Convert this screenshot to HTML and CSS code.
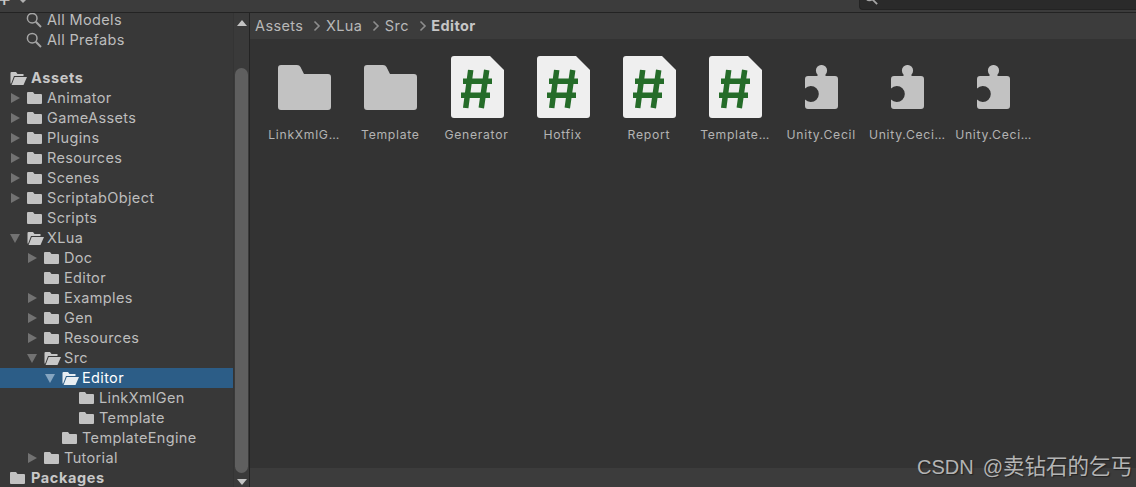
FILE: index.html
```html
<!DOCTYPE html>
<html lang="en">
<head>
<meta charset="utf-8">
<title>Project</title>
<link rel="stylesheet" href="styles.css">
</head>
<body>
<svg class="defs" width="0" height="0" aria-hidden="true">
  <symbol id="f" viewBox="0 0 15 12"><path d="M1 0H6L7.5 2H14a1 1 0 0 1 1 1V11a1 1 0 0 1-1 1H1a1 1 0 0 1-1-1V1a1 1 0 0 1 1-1Z"/></symbol>
  <symbol id="o" viewBox="0 0 17 13"><path d="M1.500 0H6L7.500 2H13.500V4H4L1.200 11.500H.5V1a1 1 0 0 1 1-1Z"/><path d="M4.700 5H17L13.500 13H1.600Z"/></symbol>
  <symbol id="s" viewBox="0 0 16 16"><circle cx="6.200" cy="6.200" r="4.800" fill="none" stroke="#a5a5a5" stroke-width="1.500"/><path d="M9.800 9.800 15 15" stroke="#a5a5a5" stroke-width="2"/></symbol>
  <symbol id="big" viewBox="0 0 53 45"><path d="M3 0H19Q21.500 0 22.500 2L26 9H50a3 3 0 0 1 3 3V42a3 3 0 0 1-3 3H3a3 3 0 0 1-3-3V3a3 3 0 0 1 3-3Z"/></symbol>
  <symbol id="doc" viewBox="0 0 53 62"><path d="M3 0H39L53 14V59a3 3 0 0 1-3 3H3a3 3 0 0 1-3-3V3a3 3 0 0 1 3-3Z" fill="#efefef"/><path d="M19.700 14 14.700 52M35.700 14 30.300 52M12 25.300H41M10 39.300H39" fill="none" stroke="#256c29" stroke-width="5.500"/></symbol>
  <symbol id="pz" viewBox="0 0 33 44"><path d="M3 11H12.500V9.500A5.600 5.600 0 1 1 20.500 9.500V11H30a3 3 0 0 1 3 3V41a3 3 0 0 1-3 3H3a3 3 0 0 1-3-3V34.500A8 8 0 1 0 0 23.500V14a3 3 0 0 1 3-3Z"/></symbol>
</svg>
<header class="topbar">
  <span class="plus">+</span><span class="caret"></span>
  <div class="search"><svg class="search-icon"><use href="#s"/></svg></div>
</header>
<main class="panels">
  <aside class="side">
    <nav class="tree">
      <div class="row d1 first"><span class="arrow"></span><svg class="ico mag"><use href="#s"/></svg><span>All Models</span></div>
      <div class="row d1 gapafter"><span class="arrow"></span><svg class="ico mag"><use href="#s"/></svg><span>All Prefabs</span></div>
      <div class="row d0 bold"><span class="arrow"></span><svg class="ico open"><use href="#o"/></svg><span>Assets</span></div>
      <div class="row d1"><span class="arrow right"></span><svg class="ico"><use href="#f"/></svg><span>Animator</span></div>
      <div class="row d1"><span class="arrow right"></span><svg class="ico"><use href="#f"/></svg><span>GameAssets</span></div>
      <div class="row d1"><span class="arrow right"></span><svg class="ico"><use href="#f"/></svg><span>Plugins</span></div>
      <div class="row d1"><span class="arrow right"></span><svg class="ico"><use href="#f"/></svg><span>Resources</span></div>
      <div class="row d1"><span class="arrow right"></span><svg class="ico"><use href="#f"/></svg><span>Scenes</span></div>
      <div class="row d1"><span class="arrow right"></span><svg class="ico"><use href="#f"/></svg><span>ScriptabObject</span></div>
      <div class="row d1"><span class="arrow"></span><svg class="ico"><use href="#f"/></svg><span>Scripts</span></div>
      <div class="row d1"><span class="arrow down"></span><svg class="ico open"><use href="#o"/></svg><span>XLua</span></div>
      <div class="row d2"><span class="arrow right"></span><svg class="ico"><use href="#f"/></svg><span>Doc</span></div>
      <div class="row d2"><span class="arrow"></span><svg class="ico"><use href="#f"/></svg><span>Editor</span></div>
      <div class="row d2"><span class="arrow right"></span><svg class="ico"><use href="#f"/></svg><span>Examples</span></div>
      <div class="row d2"><span class="arrow right"></span><svg class="ico"><use href="#f"/></svg><span>Gen</span></div>
      <div class="row d2"><span class="arrow right"></span><svg class="ico"><use href="#f"/></svg><span>Resources</span></div>
      <div class="row d2"><span class="arrow down"></span><svg class="ico open"><use href="#o"/></svg><span>Src</span></div>
      <div class="row d3 selected"><span class="arrow down"></span><svg class="ico open"><use href="#o"/></svg><span>Editor</span></div>
      <div class="row d4"><span class="arrow"></span><svg class="ico"><use href="#f"/></svg><span>LinkXmlGen</span></div>
      <div class="row d4"><span class="arrow"></span><svg class="ico"><use href="#f"/></svg><span>Template</span></div>
      <div class="row d3"><span class="arrow"></span><svg class="ico"><use href="#f"/></svg><span>TemplateEngine</span></div>
      <div class="row d2"><span class="arrow right"></span><svg class="ico"><use href="#f"/></svg><span>Tutorial</span></div>
      <div class="row d0 bold"><span class="arrow"></span><svg class="ico"><use href="#f"/></svg><span>Packages</span></div>
    </nav>
    <div class="scrollbar">
      <span class="sb-up"></span>
      <span class="thumb"></span>
      <span class="sb-down"></span>
    </div>
  </aside>
  <section class="content">
    <div class="crumbs">
      <span>Assets</span><svg class="chev" viewBox="0 0 8 12"><path d="M1.500 1.500 6 6 1.500 10.500"/></svg>
      <span>XLua</span><svg class="chev" viewBox="0 0 8 12"><path d="M1.500 1.500 6 6 1.500 10.500"/></svg>
      <span>Src</span><svg class="chev" viewBox="0 0 8 12"><path d="M1.500 1.500 6 6 1.500 10.500"/></svg>
      <strong>Editor</strong>
    </div>
    <div class="grid">
      <figure class="item"><div class="thumb-box"><svg class="big"><use href="#big"/></svg></div><figcaption>LinkXmlG…</figcaption></figure>
      <figure class="item"><div class="thumb-box"><svg class="big"><use href="#big"/></svg></div><figcaption>Template</figcaption></figure>
      <figure class="item"><div class="thumb-box"><svg class="docicon"><use href="#doc"/></svg></div><figcaption>Generator</figcaption></figure>
      <figure class="item"><div class="thumb-box"><svg class="docicon"><use href="#doc"/></svg></div><figcaption>Hotfix</figcaption></figure>
      <figure class="item"><div class="thumb-box"><svg class="docicon"><use href="#doc"/></svg></div><figcaption>Report</figcaption></figure>
      <figure class="item"><div class="thumb-box"><svg class="docicon"><use href="#doc"/></svg></div><figcaption>Template…</figcaption></figure>
      <figure class="item"><div class="thumb-box"><svg class="puzzle"><use href="#pz"/></svg></div><figcaption>Unity.Cecil</figcaption></figure>
      <figure class="item"><div class="thumb-box"><svg class="puzzle"><use href="#pz"/></svg></div><figcaption>Unity.Ceci…</figcaption></figure>
      <figure class="item"><div class="thumb-box"><svg class="puzzle"><use href="#pz"/></svg></div><figcaption>Unity.Ceci…</figcaption></figure>
    </div>
    <footer class="statusbar"></footer>
    <div class="watermark">CSDN @<span class="cjk">卖钻石的乞丐</span></div>
  </section>
</main>
</body>
</html>
```

FILE: styles.css
```css
* { box-sizing: border-box; }
html, body { margin: 0; height: 487px; overflow: hidden; }
body {
  background: #383838;
  font-family: Inter, "Noto Sans", sans-serif;
  color: #c4c4c4;
  display: flex;
  flex-direction: column;
}
.defs { position: absolute; }

.topbar {
  height: 13px;
  flex: none;
  background: #3c3c3c;
  border-bottom: 1px solid #232323;
  display: flex;
  overflow: hidden;
  position: relative;
}
.plus {
  font-size: 22px;
  line-height: 12px;
  margin: -8px 0 0 -3px;
  color: #c8c8c8;
  height: 12px;
}
.caret {
  width: 0; height: 0;
  margin: 0 0 0 8px;
  border: 3px solid transparent;
  border-top: 3px solid #b0b0b0;
}
.search {
  margin-left: auto;
  width: 277px;
  height: 10px;
  background: #2a2a2a;
  border-radius: 0 0 0 4px;
  border: 1px solid #232323;
  border-top: 0;
  border-right: 0;
}
.search-icon { width: 14px; height: 14px; margin: -9px 0 0 4px; display: block; }

.panels { flex: 1; display: flex; min-height: 0; }

.side {
  width: 250px;
  flex: none;
  display: flex;
  border-right: 1px solid #232323;
  background: #383838;
}
.tree { width: 233px; flex: none; overflow: hidden; }
.row {
  height: 20px;
  display: flex;
  align-items: center;
  font-size: 14.5px;
  line-height: 14px;
  letter-spacing: .35px;
  white-space: nowrap;
  color: #bdbdbd;
}
.first { margin-top: -3px; }
.gapafter { margin-bottom: 18px; }
.d0 { padding-left: 0; }
.d0 .arrow { width: 10px; }
.d1 { padding-left: 11px; }
.d2 { padding-left: 28px; }
.d3 { padding-left: 46px; }
.d4 { padding-left: 63px; }
.bold { font-weight: 700; letter-spacing: .6px; color: #c8c8c8; }
.selected { background: #2c5d87; color: #fff; }

.arrow { width: 16px; height: 10px; flex: none; position: relative; }
.right::before {
  content: "";
  position: absolute;
  left: 0; top: 0;
  border-left: 9px solid #727272;
  border-top: 5px solid transparent;
  border-bottom: 5px solid transparent;
}
.down::before {
  content: "";
  position: absolute;
  left: -1px; top: 1px;
  border-top: 9px solid #727272;
  border-left: 5px solid transparent;
  border-right: 5px solid transparent;
}
.selected .down::before { border-top-color: #86a5c0; }

.ico {
  width: 15px;
  height: 12px;
  flex: none;
  margin-right: 5px;
  fill: #c2c2c2;
}
.open { width: 17px; height: 13px; margin-right: 3px; fill: #c8c8c8; }
.selected .open { fill: #e8eef3; }
.mag { width: 16px; height: 16px; margin-left: -1px; margin-right: 5px; }
.d0.bold .ico { margin-right: 6px; }
.d0.bold .open { margin-right: 4px; }

.scrollbar {
  width: 16px;
  flex: none;
  background: #3a3a3a;
  border-left: 1px solid #343434;
  display: flex;
  flex-direction: column;
  align-items: center;
}
.sb-up {
  margin-top: 7px;
  border-bottom: 6px solid #c4c4c4;
  border-left: 5px solid transparent;
  border-right: 5px solid transparent;
}
.thumb {
  margin-top: 42px;
  width: 13px;
  height: 405px;
  border-radius: 7px;
  background: #5f5f5f;
}
.sb-down {
  margin-top: 6px;
  border-top: 6px solid #c4c4c4;
  border-left: 5px solid transparent;
  border-right: 5px solid transparent;
}

.content {
  flex: 1;
  min-width: 0;
  background: #333333;
  display: flex;
  flex-direction: column;
  position: relative;
}
.crumbs {
  height: 26px;
  flex: none;
  background: #3c3c3c;
  display: flex;
  align-items: center;
  padding-left: 5px;
  font-size: 14.5px;
  letter-spacing: .4px;
  color: #b8b8b8;
}
.crumbs strong { font-weight: 700; color: #c6c6c6; }
.crumbs span, .crumbs strong { position: relative; top: -1px; }
.chev {
  width: 8px;
  height: 12px;
  margin: 0 4.5px 0 10px;
  fill: none;
  stroke: #8e8e8e;
  stroke-width: 1.6;
}
.grid {
  flex: 1;
  display: flex;
  align-items: flex-start;
  padding: 17px 0 0 11px;
}
.item {
  width: 86.2px;
  margin: 0;
  flex: none;
  display: flex;
  flex-direction: column;
  align-items: center;
}
.thumb-box {
  height: 62px;
  width: 100%;
  display: flex;
  align-items: center;
  justify-content: center;
}
figcaption {
  margin-top: 9px;
  font-size: 12.2px;
  line-height: 16px;
  letter-spacing: .7px;
  color: #b4b4b4;
  white-space: nowrap;
}
.big { width: 53px; height: 45px; fill: #c2c2c2; }
.docicon { width: 53px; height: 62px; margin-left: 1.5px; }
.puzzle { width: 33px; height: 44px; fill: #c2c2c2; }

.statusbar { height: 19px; flex: none; background: #3c3c3c; }
.watermark {
  position: absolute;
  right: 4px;
  bottom: 8px;
  font-family: "Liberation Sans", "Noto Sans CJK SC", sans-serif;
  font-size: 20px;
  line-height: 24px;
  word-spacing: 3.5px;
  color: #b4b4b4;
  text-shadow: 1px 1px 1px #222;
}
.cjk { font-size: 21.5px; }
```
